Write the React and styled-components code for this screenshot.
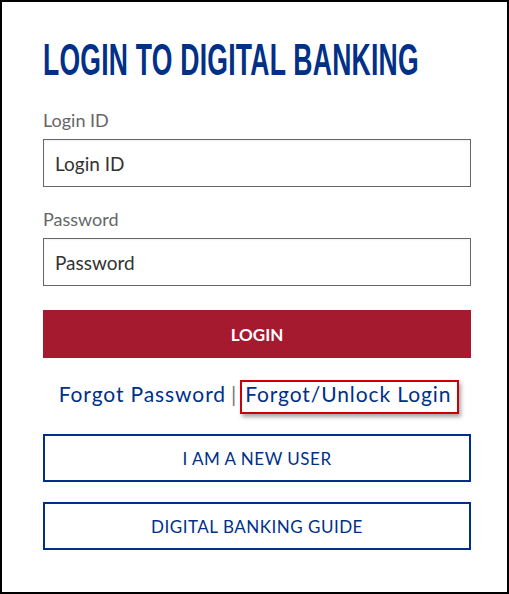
import React from 'react';
import styled, { createGlobalStyle } from 'styled-components';

const GlobalStyle = createGlobalStyle`
    html, body {
        margin: 0;
        padding: 0;
        background: #fff;
    }
    * {
        box-sizing: border-box;
    }
`;

const Frame = styled.div`
    width: 509px;
    height: 594px;
    border: 2px solid #000;
    background: #fff;
    padding: 35px 36px 0 41px;
    font-family: Lato, "Liberation Sans", sans-serif;
`;

const Title = styled.h1`
    margin: 0 0 27px;
    font-family: "Liberation Sans", Arial, sans-serif;
    font-weight: 700;
    font-size: 45px;
    line-height: 45px;
    letter-spacing: 0.4px;
    color: #003087;
    white-space: nowrap;
    transform: scaleX(0.59);
    transform-origin: left center;
`;

const Field = styled.div`
    display: flex;
    flex-direction: column;
    margin-bottom: ${(p) => p.$gap || 0}px;
`;

const Label = styled.label`
    display: block;
    font-size: 18px;
    line-height: 22px;
    color: #666;
    margin-bottom: 8px;
`;

const Input = styled.input`
    width: 100%;
    height: 48px;
    border: 1px solid #666;
    border-radius: 0;
    padding: 0 11px;
    font-family: inherit;
    font-size: 19px;
    color: #333;
    box-shadow: inset 0 1px 2px rgba(0, 0, 0, 0.06);
    outline: none;
    &::placeholder {
        color: #333;
        opacity: 1;
    }
`;

const PrimaryButton = styled.button`
    display: block;
    width: 100%;
    height: 48px;
    border: none;
    background: #a51a2f;
    color: #fff;
    font-family: inherit;
    font-weight: 700;
    font-size: 17px;
    cursor: pointer;
`;

const Links = styled.div`
    display: flex;
    justify-content: center;
    align-items: flex-start;
    margin: 22px 0 20px;
    padding-left: 4px;
    font-size: 21px;
    letter-spacing: 0.9px;
    color: #003087;
`;

const LinkText = styled.a`
    color: #003087;
    text-decoration: none;
    line-height: 23px;
    padding-top: 2px;
    white-space: nowrap;
`;

const Pipe = styled.span`
    color: #777;
    line-height: 23px;
    padding: 2px 3px 0 5px;
`;

const Highlight = styled.a`
    color: #003087;
    text-decoration: none;
    white-space: nowrap;
    line-height: 23px;
    padding: 0 6px 7px 3px;
    border: 2px solid #c00;
    box-shadow: 2px 3px 4px rgba(0, 0, 0, 0.35);
`;

const OutlineButton = styled.button`
    display: block;
    width: 100%;
    height: 48px;
    margin-bottom: 20px;
    border: 2px solid #003087;
    background: #fff;
    color: #003087;
    font-family: inherit;
    font-size: 17px;
    letter-spacing: 0.5px;
    cursor: pointer;
`;

const App = () => {
    return (
        <>
            <GlobalStyle />
            <Frame>
                <Title>LOGIN TO DIGITAL BANKING</Title>
                <Field $gap={21}>
                    <Label htmlFor="loginId">Login ID</Label>
                    <Input id="loginId" placeholder="Login ID" />
                </Field>
                <Field $gap={24}>
                    <Label htmlFor="password">Password</Label>
                    <Input id="password" type="password" placeholder="Password" />
                </Field>
                <PrimaryButton>LOGIN</PrimaryButton>
                <Links>
                    <LinkText href="#">Forgot Password</LinkText>
                    <Pipe>|</Pipe>
                    <Highlight href="#">Forgot/Unlock Login</Highlight>
                </Links>
                <OutlineButton>I AM A NEW USER</OutlineButton>
                <OutlineButton>DIGITAL BANKING GUIDE</OutlineButton>
            </Frame>
        </>
    );
};

export default App;
